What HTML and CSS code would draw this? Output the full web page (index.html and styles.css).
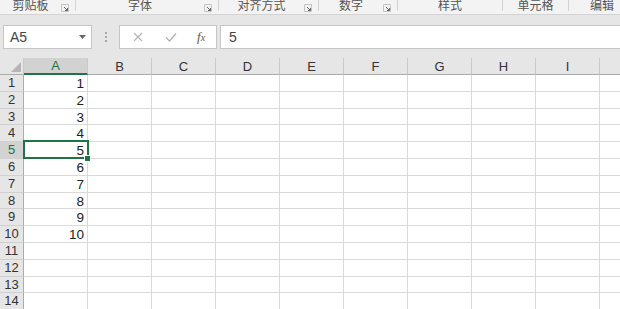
FILE: index.html
```html
<!DOCTYPE html>
<html lang="zh-CN">
<head>
    <meta charset="UTF-8">
    <title>Excel</title>
    <link rel="stylesheet" href="styles.css">
</head>
<body>

<div class="ribbon">
    <div class="group g-clip"><span class="label">剪贴板</span><span class="launcher"><svg width="8" height="8" viewBox="0 0 8 8"><path d="M0.5 7.5V0.5H7.5V7.5Z" fill="none" stroke="#c4c4c4"/><path d="M3 3L6.5 6.5M4 6.5H6.5V4" fill="none" stroke="#666"/></svg></span></div>
    <div class="group g-font"><span class="label">字体</span><span class="launcher"><svg width="8" height="8" viewBox="0 0 8 8"><path d="M0.5 7.5V0.5H7.5V7.5Z" fill="none" stroke="#c4c4c4"/><path d="M3 3L6.5 6.5M4 6.5H6.5V4" fill="none" stroke="#666"/></svg></span></div>
    <div class="group g-align"><span class="label">对齐方式</span><span class="launcher"><svg width="8" height="8" viewBox="0 0 8 8"><path d="M0.5 7.5V0.5H7.5V7.5Z" fill="none" stroke="#c4c4c4"/><path d="M3 3L6.5 6.5M4 6.5H6.5V4" fill="none" stroke="#666"/></svg></span></div>
    <div class="group g-num"><span class="label">数字</span><span class="launcher"><svg width="8" height="8" viewBox="0 0 8 8"><path d="M0.5 7.5V0.5H7.5V7.5Z" fill="none" stroke="#c4c4c4"/><path d="M3 3L6.5 6.5M4 6.5H6.5V4" fill="none" stroke="#666"/></svg></span></div>
    <div class="group g-style"><span class="label">样式</span></div>
    <div class="group g-cells"><span class="label">单元格</span></div>
    <div class="group g-edit"><span class="label">编辑</span></div>
</div>

<div class="toolbar">
    <div class="namebox">
        <span>A5</span>
        <svg width="7" height="4" viewBox="0 0 7 4"><path d="M0 0H7L3.5 4Z" fill="#666"/></svg>
    </div>
    <div class="grip"><i></i><i></i><i></i></div>
    <div class="fxbox">
        <svg class="ico" width="10" height="10" viewBox="0 0 10 10"><path d="M1 1L9 9M9 1L1 9" stroke="#b4b4b4" stroke-width="1.2" fill="none"/></svg>
        <svg class="ico" width="12" height="10" viewBox="0 0 12 10"><path d="M1 5.5L4.5 9L11 1.5" stroke="#b4b4b4" stroke-width="1.4" fill="none"/></svg>
        <span class="fx">f<small>x</small></span>
    </div>
    <div class="formula">5</div>
</div>

<div class="sheet">
    <div class="corner"><svg width="10" height="10" viewBox="0 0 10 10"><path d="M10 0V10H0Z" fill="#b5b5b5"/></svg></div>
    <div class="colhead sel">A</div>
    <div class="colhead">B</div>
    <div class="colhead">C</div>
    <div class="colhead">D</div>
    <div class="colhead">E</div>
    <div class="colhead">F</div>
    <div class="colhead">G</div>
    <div class="colhead">H</div>
    <div class="colhead">I</div>
    <div class="colhead"></div>

    <div class="rowhead">1</div><div class="cell">1</div><div class="cell"></div><div class="cell"></div><div class="cell"></div><div class="cell"></div><div class="cell"></div><div class="cell"></div><div class="cell"></div><div class="cell"></div><div class="cell"></div>
    <div class="rowhead">2</div><div class="cell">2</div><div class="cell"></div><div class="cell"></div><div class="cell"></div><div class="cell"></div><div class="cell"></div><div class="cell"></div><div class="cell"></div><div class="cell"></div><div class="cell"></div>
    <div class="rowhead">3</div><div class="cell">3</div><div class="cell"></div><div class="cell"></div><div class="cell"></div><div class="cell"></div><div class="cell"></div><div class="cell"></div><div class="cell"></div><div class="cell"></div><div class="cell"></div>
    <div class="rowhead">4</div><div class="cell">4</div><div class="cell"></div><div class="cell"></div><div class="cell"></div><div class="cell"></div><div class="cell"></div><div class="cell"></div><div class="cell"></div><div class="cell"></div><div class="cell"></div>
    <div class="rowhead sel">5</div><div class="cell active">5</div><div class="cell"></div><div class="cell"></div><div class="cell"></div><div class="cell"></div><div class="cell"></div><div class="cell"></div><div class="cell"></div><div class="cell"></div><div class="cell"></div>
    <div class="rowhead">6</div><div class="cell">6</div><div class="cell"></div><div class="cell"></div><div class="cell"></div><div class="cell"></div><div class="cell"></div><div class="cell"></div><div class="cell"></div><div class="cell"></div><div class="cell"></div>
    <div class="rowhead">7</div><div class="cell">7</div><div class="cell"></div><div class="cell"></div><div class="cell"></div><div class="cell"></div><div class="cell"></div><div class="cell"></div><div class="cell"></div><div class="cell"></div><div class="cell"></div>
    <div class="rowhead">8</div><div class="cell">8</div><div class="cell"></div><div class="cell"></div><div class="cell"></div><div class="cell"></div><div class="cell"></div><div class="cell"></div><div class="cell"></div><div class="cell"></div><div class="cell"></div>
    <div class="rowhead">9</div><div class="cell">9</div><div class="cell"></div><div class="cell"></div><div class="cell"></div><div class="cell"></div><div class="cell"></div><div class="cell"></div><div class="cell"></div><div class="cell"></div><div class="cell"></div>
    <div class="rowhead">10</div><div class="cell">10</div><div class="cell"></div><div class="cell"></div><div class="cell"></div><div class="cell"></div><div class="cell"></div><div class="cell"></div><div class="cell"></div><div class="cell"></div><div class="cell"></div>
    <div class="rowhead">11</div><div class="cell"></div><div class="cell"></div><div class="cell"></div><div class="cell"></div><div class="cell"></div><div class="cell"></div><div class="cell"></div><div class="cell"></div><div class="cell"></div><div class="cell"></div>
    <div class="rowhead">12</div><div class="cell"></div><div class="cell"></div><div class="cell"></div><div class="cell"></div><div class="cell"></div><div class="cell"></div><div class="cell"></div><div class="cell"></div><div class="cell"></div><div class="cell"></div>
    <div class="rowhead">13</div><div class="cell"></div><div class="cell"></div><div class="cell"></div><div class="cell"></div><div class="cell"></div><div class="cell"></div><div class="cell"></div><div class="cell"></div><div class="cell"></div><div class="cell"></div>
    <div class="rowhead">14</div><div class="cell"></div><div class="cell"></div><div class="cell"></div><div class="cell"></div><div class="cell"></div><div class="cell"></div><div class="cell"></div><div class="cell"></div><div class="cell"></div><div class="cell"></div>
</div>

</body>
</html>
```

FILE: styles.css
```css
body {
    margin: 0;
    width: 620px;
    height: 309px;
    overflow: hidden;
    background-color: #e6e6e6;
    font-family: "Liberation Sans", "Noto Sans CJK SC", sans-serif;
    color: #444;
}

/* ribbon group captions */
.ribbon {
    display: flex;
    height: 14px;
    overflow: hidden;
    background-color: #f3f3f3;
    border-bottom: 1px solid #d4d4d4;
    font-family: "Noto Sans CJK SC", sans-serif;
    font-size: 12px;
    color: #555;
}
.group {
    display: flex;
    flex: none;
    height: 11px;
    border-right: 1px solid #d2d2d2;
}
.label {
    flex: 1;
    text-align: center;
    line-height: 12px;
    margin-top: -1px;
    white-space: nowrap;
}
.launcher {
    display: flex;
    width: 14px;
    padding: 4px 0 0 0;
    box-sizing: border-box;
}
.launcher svg {
    display: block;
}
.g-clip { width: 75px; }
.g-font { width: 142px; }
.g-align { width: 99px; }
.g-num { width: 78px; }
.g-style { width: 104px; }
.g-cells { width: 65px; }
.g-edit { width: 66px; border-right: none; }

/* name box and formula bar */
.toolbar {
    display: flex;
    align-items: center;
    height: 24px;
    padding: 10px 0 9px 3px;
}
.namebox {
    display: flex;
    align-items: center;
    justify-content: space-between;
    width: 89px;
    height: 24px;
    padding: 0 5px 0 6px;
    box-sizing: border-box;
    background-color: #fff;
    border: 1px solid #c6c6c6;
    font-size: 14px;
}
.grip {
    display: flex;
    flex-direction: column;
    gap: 2px;
    margin: 0 12px 0 13px;
}
.grip i {
    width: 2px;
    height: 2px;
    background-color: #a8a8a8;
}
.fxbox {
    display: flex;
    align-items: center;
    width: 98px;
    height: 24px;
    box-sizing: border-box;
    padding-left: 13px;
    gap: 22px;
    background-color: #fff;
    border: 1px solid #c6c6c6;
}
.fx {
    font-family: "Liberation Serif", serif;
    font-style: italic;
    font-size: 13px;
    color: #555;
    margin-left: -2px;
}
.fx small {
    font-size: 10px;
}
.formula {
    flex: 1;
    height: 24px;
    box-sizing: border-box;
    margin-left: 3px;
    padding-left: 8px;
    line-height: 22px;
    background-color: #fff;
    border: 1px solid #c6c6c6;
    border-right: none;
    font-size: 14px;
}

/* worksheet grid */
.sheet {
    display: grid;
    grid-template-columns: 24px repeat(9, 64px) 40px;
    grid-template-rows: 17px repeat(14, 16.8px);
    background-color: #fff;
    font-size: 13.5px;
}
.corner {
    display: flex;
    align-items: flex-end;
    justify-content: flex-end;
    padding: 0 2px 2px 0;
    background-color: #e6e6e6;
    border-right: 1px solid #c8c8c8;
    border-bottom: 1px solid #ababab;
}
.colhead {
    background-color: #e6e6e6;
    border-right: 1px solid #c8c8c8;
    border-bottom: 1px solid #ababab;
    text-align: center;
    line-height: 17px;
    font-size: 13px;
    color: #333;
}
.colhead.sel {
    background-color: #d2d2d2;
    border-bottom: 2px solid #217346;
    line-height: 16px;
    color: #217346;
}
.rowhead {
    background-color: #e6e6e6;
    border-right: 1px solid #ababab;
    border-bottom: 1px solid #d0d0d0;
    text-align: center;
    line-height: 16px;
    font-size: 13px;
    color: #333;
}
.rowhead.sel {
    background-color: #d2d2d2;
    color: #217346;
}
.cell {
    position: relative;
    border-right: 1px solid #dadada;
    border-bottom: 1px solid #dadada;
    text-align: right;
    padding-right: 3px;
    line-height: 17px;
    color: #222;
}
.cell.active::before {
    content: "";
    position: absolute;
    top: -2px;
    left: -1px;
    right: -2px;
    bottom: -1px;
    border: 2px solid #217346;
    z-index: 1;
}
.cell.active::after {
    content: "";
    position: absolute;
    right: -4px;
    bottom: -4px;
    width: 5px;
    height: 5px;
    background-color: #217346;
    border: 1px solid #fff;
    z-index: 2;
}
```
